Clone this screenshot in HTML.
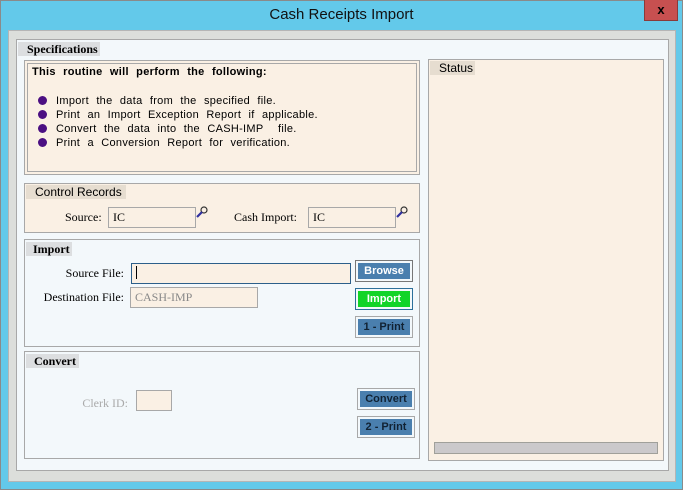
<!DOCTYPE html>
<html><head><style>
*{margin:0;padding:0;box-sizing:border-box}
body{width:683px;height:490px;position:relative;background:#63c9ea;font-family:"Liberation Serif",serif;overflow:hidden}
.a{position:absolute}
.win{left:0;top:0;width:683px;height:490px;border:1px solid #8a8a8a}
.title{left:0;top:6px;width:683px;text-align:center;font:15px "Liberation Sans",sans-serif;color:#111}
.close{left:644px;top:0;width:34px;height:21px;background:#c75050;border:1px solid #8a3a3a;border-top:none;color:#000;font:bold 13px "Liberation Sans",sans-serif;text-align:center;line-height:20px}
.gray{left:8px;top:30px;width:668px;height:452px;background:#dcdedb;border:1px solid #b5b5b5}
.pan{left:16px;top:39px;width:653px;height:432px;background:#f3f8fb;border:1px solid #a8a8a8}
.box{border:1px solid #a8a8a8}
.lbl{background:#dcdee0;font-weight:bold;font-size:12px;height:14px;line-height:14px;padding-left:2px}
.ss{font-family:"Liberation Sans",sans-serif}
.inp{background:#faf0e4;border:1px solid #a8a8a8;font-size:12px;padding-left:4px;line-height:19px}
.btn{border:1px solid #a8a8a8;padding:2px;background:#f3f8fb}
.btn div{background:#4a7fae;color:#123;font:bold 11px "Liberation Sans",sans-serif;text-align:center;height:16px;line-height:16px}
.bl{font:11px "Liberation Sans",sans-serif;word-spacing:4px;letter-spacing:.3px;height:14px;line-height:14px}
.dot{display:inline-block;width:9px;height:9px;border-radius:50%;background:#4b0f82;margin:0 9px 0 14px;vertical-align:-1px}
.r{text-align:right;font-size:12px}
</style></head><body>
<div class="a win"></div>
<div class="a title">Cash Receipts Import</div>
<div class="a close">x</div>
<div class="a gray"></div>
<div class="a pan"></div>
<div class="a lbl" style="left:18px;top:42px;width:82px;padding-left:9px">Specifications</div>
<div class="a box" style="left:24px;top:60px;width:396px;height:115px;background:#faf0e4;padding:2px"><div style="border:1px solid #a8a8a8;height:109px"></div></div>
<div class="a ss" style="left:32px;top:66px;font-weight:bold;font-size:11px;word-spacing:4px;letter-spacing:.3px">This routine will perform the following:</div>
<div class="a" style="left:24px;top:94px">
<div class="bl"><span class="dot"></span>Import the data from the specified file.</div>
<div class="bl"><span class="dot"></span>Print an Import Exception Report if applicable.</div>
<div class="bl"><span class="dot"></span>Convert the data into the CASH-IMP &nbsp;file.</div>
<div class="bl"><span class="dot"></span>Print a Conversion Report for verification.</div>
</div>
<div class="a box" style="left:24px;top:183px;width:396px;height:50px;background:#faf0e4"></div>
<div class="a ss" style="left:26px;top:185px;width:100px;height:14px;background:#e6ddd0;font-size:12px;line-height:14px;padding-left:9px">Control Records</div>
<div class="a" style="left:65px;top:210px;font-size:12px">Source:</div>
<div class="a inp" style="left:108px;top:207px;width:88px;height:21px">IC</div>
<div class="a" style="left:234px;top:210px;font-size:12px">Cash Import:</div>
<div class="a inp" style="left:308px;top:207px;width:88px;height:21px">IC</div>
<svg class="a" style="left:196px;top:206px" width="12" height="12"><circle cx="8" cy="4" r="3" fill="none" stroke="#333" stroke-width="1.2"/><path d="M6 6L1 11" stroke="#3030a0" stroke-width="2.2"/></svg>
<svg class="a" style="left:396px;top:206px" width="12" height="12"><circle cx="8" cy="4" r="3" fill="none" stroke="#333" stroke-width="1.2"/><path d="M6 6L1 11" stroke="#3030a0" stroke-width="2.2"/></svg>
<div class="a box" style="left:24px;top:239px;width:396px;height:108px"></div>
<div class="a lbl" style="left:26px;top:242px;width:46px;padding-left:7px">Import</div>
<div class="a r" style="left:24px;top:266px;width:100px">Source File:</div>
<div class="a inp" style="left:131px;top:263px;width:220px;height:21px;border-color:#2c5f8a"><span style="border-left:1px solid #000;display:inline-block;height:13px;vertical-align:-2px"></span></div>
<div class="a r" style="left:24px;top:290px;width:100px">Destination File:</div>
<div class="a inp" style="left:130px;top:287px;width:128px;height:21px;color:#888">CASH-IMP</div>
<div class="a btn" style="left:355px;top:260px;width:58px;height:22px;border-color:#777"><div style="color:#fff">Browse</div></div>
<div class="a btn" style="left:355px;top:288px;width:58px;height:22px;border-color:#2c6f9a"><div style="background:#12d428;color:#fff">Import</div></div>
<div class="a btn" style="left:355px;top:316px;width:58px;height:22px"><div>1 - Print</div></div>
<div class="a box" style="left:24px;top:351px;width:396px;height:108px"></div>
<div class="a lbl" style="left:26px;top:354px;width:53px;padding-left:8px">Convert</div>
<div class="a r" style="left:28px;top:396px;width:100px;color:#aaa">Clerk ID:</div>
<div class="a inp" style="left:136px;top:390px;width:36px;height:21px"></div>
<div class="a btn" style="left:357px;top:388px;width:58px;height:22px"><div>Convert</div></div>
<div class="a btn" style="left:357px;top:416px;width:58px;height:22px"><div>2 - Print</div></div>
<div class="a box" style="left:428px;top:59px;width:236px;height:402px;background:#faf0e4"></div>
<div class="a ss" style="left:430px;top:61px;width:45px;height:14px;background:#e6ddd0;font-size:12px;line-height:14px;padding-left:9px">Status</div>
<div class="a" style="left:434px;top:442px;width:224px;height:12px;background:#cbc9cb;border:1px solid #a0a09a"></div>
</body></html>
